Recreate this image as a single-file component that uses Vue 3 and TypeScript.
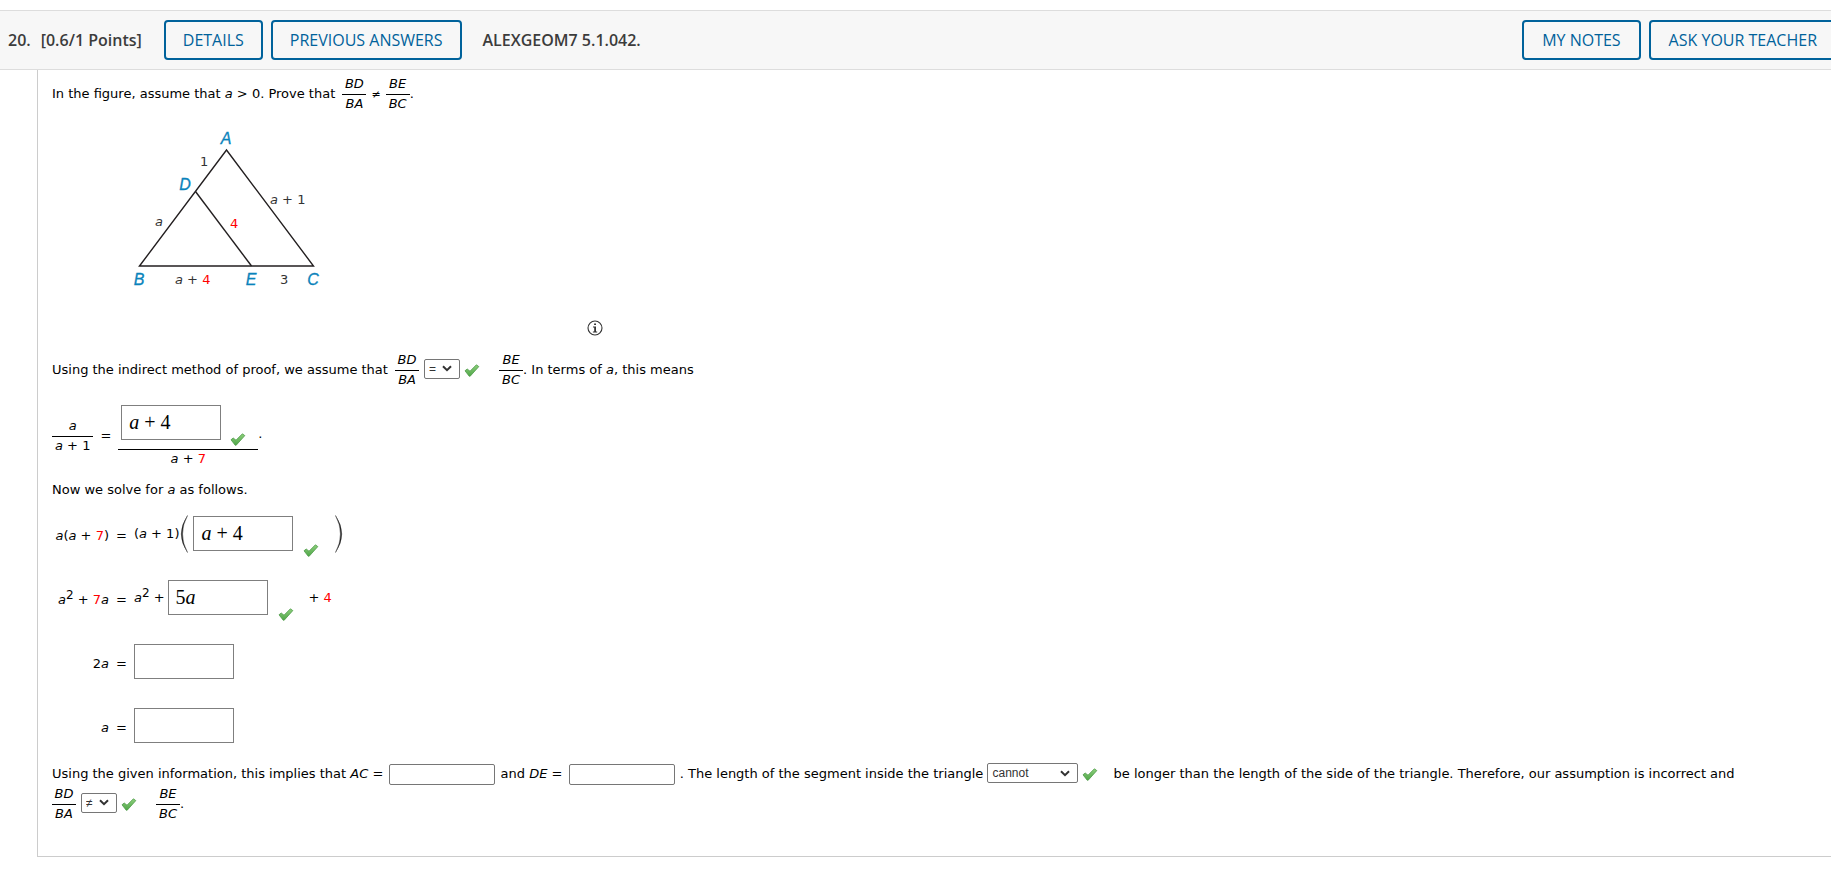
<script setup lang="ts">
import { reactive, ref } from 'vue'

type Part = { text: string; italic?: boolean }

const answers = reactive<Record<string, string>>({
  numerator: 'a + 4',
  factor: 'a + 4',
  middle: '5a',
  twoA: '',
  oneA: '',
})
const focused = ref('')
const relation = ref('=')
const conclusion = ref('≠')
const ability = ref('cannot')
const lengthAC = ref('')
const lengthDE = ref('')

// Variables are set in italics, digits and operators upright.
function parts(value: string): Part[] {
  return (value.match(/[a-z]+|[^a-z]+/gi) ?? []).map((text) => ({
    text,
    italic: /[a-z]/i.test(text),
  }))
}

function shown(key: string): string {
  return focused.value === key ? answers[key] : ''
}

function update(key: string, event: Event) {
  answers[key] = (event.target as HTMLInputElement).value
}
</script>

<template>
  <svg class="defs" aria-hidden="true">
    <defs>
      <linearGradient id="leaf" x1="0" y1="0" x2="0" y2="1">
        <stop offset="0" stop-color="#8ed07c" />
        <stop offset="1" stop-color="#4fa648" />
      </linearGradient>
      <symbol id="tick" viewBox="0 0 16 13">
        <path d="M1 6.8 L3.2 5 L6 7.2 L12.4 0.8 L14.8 2.6 L6.2 12.2 L5.2 12.2 Z" fill="url(#leaf)" stroke="#4c9a48" stroke-width="0.8" stroke-linejoin="round" />
      </symbol>
    </defs>
  </svg>

  <header class="bar">
    <strong class="number">20.</strong>
    <strong class="points">[0.6/1 Points]</strong>
    <button type="button" class="btn">DETAILS</button>
    <button type="button" class="btn">PREVIOUS ANSWERS</button>
    <strong class="code">ALEXGEOM7 5.1.042.</strong>
    <div class="actions">
      <button type="button" class="btn">MY NOTES</button>
      <button type="button" class="btn">ASK YOUR TEACHER</button>
    </div>
  </header>

  <main class="question">
    <p class="line">
      In the figure, assume that <i>a</i> &gt; 0. Prove that
      <span class="frac"><i>BD</i><i>BA</i></span>
      <span class="neq">≠</span>
      <span class="frac"><i>BE</i><i>BC</i></span>.
    </p>

    <div class="figure">
      <svg class="triangle" width="300" height="180" viewBox="0 0 300 180" role="img" aria-label="Triangle ABC with segment DE">
        <g fill="none" stroke="#231f20" stroke-width="1.4">
          <path d="M87.5 146 L174.5 30 L261.5 146 Z" />
          <path d="M143.5 71.5 L199.5 146" />
        </g>
        <g class="vertex">
          <text x="174" y="24">A</text>
          <text x="133" y="70">D</text>
          <text x="87" y="165">B</text>
          <text x="199" y="165">E</text>
          <text x="261" y="165">C</text>
        </g>
        <g class="measure">
          <text x="148" y="46">1</text>
          <text x="103" y="106" font-style="italic">a</text>
          <text x="218" y="84"><tspan font-style="italic">a</tspan> + 1</text>
          <text x="178" y="108" class="red">4</text>
          <text x="123" y="164"><tspan font-style="italic">a</tspan> + <tspan class="red">4</tspan></text>
          <text x="228" y="164">3</text>
        </g>
      </svg>
      <button type="button" class="info" aria-label="Image description">
        <svg width="16" height="16" viewBox="0 0 16 16">
          <circle cx="8" cy="8" r="7" fill="none" stroke="#333" stroke-width="1.1" />
          <path d="M7.1 3.4h1.9v1.7H7.1z M6 6.4h3v5h1.2v1.1H5.9v-1.1h1.3v-3.9H6z" fill="#333" />
        </svg>
      </button>
    </div>

    <p class="line">
      Using the indirect method of proof, we assume that
      <span class="frac"><i>BD</i><i>BA</i></span>
      <select v-model="relation" class="pick" aria-label="Assumed relation">
        <option>=</option>
        <option>≠</option>
      </select>
      <svg class="tick wide"><use href="#tick" /></svg>
      <span class="frac"><i>BE</i><i>BC</i></span>. In terms of <i>a</i>, this means
    </p>

    <div class="ratio">
      <span class="frac loose"><i>a</i><span><i>a</i> + 1</span></span>
      <span>=</span>
      <span class="stack">
        <span class="top">
          <span class="math">
            <input :value="shown('numerator')" aria-label="Numerator" @focus="focused = 'numerator'" @blur="focused = ''" @input="update('numerator', $event)" />
            <span v-if="focused !== 'numerator'" class="typeset"><component :is="p.italic ? 'i' : 'span'" v-for="(p, n) in parts(answers.numerator)" :key="n">{{ p.text }}</component></span>
          </span>
          <svg class="tick"><use href="#tick" /></svg>
        </span>
        <span class="bottom"><i>a</i> + <span class="red">7</span></span>
      </span>
      <span class="stop">.</span>
    </div>

    <p class="text">Now we solve for <i>a</i> as follows.</p>

    <div class="equations">
      <span class="lhs"><i>a</i>(<i>a</i> + <span class="red">7</span>)</span>
      <span class="eq">=</span>
      <div class="rhs">
        <span>(<i>a</i> + 1)</span>
        <svg class="paren" width="10" height="38" viewBox="0 0 10 38"><path d="M8.5 0.5 Q-4 19 8.5 37.5 Q-1.4 19 8.5 0.5Z" /></svg>
        <span class="math">
          <input :value="shown('factor')" aria-label="Factor" @focus="focused = 'factor'" @blur="focused = ''" @input="update('factor', $event)" />
          <span v-if="focused !== 'factor'" class="typeset"><component :is="p.italic ? 'i' : 'span'" v-for="(p, n) in parts(answers.factor)" :key="n">{{ p.text }}</component></span>
        </span>
        <svg class="tick low"><use href="#tick" /></svg>
        <svg class="paren" width="10" height="38" viewBox="0 0 10 38"><path d="M1.5 0.5 Q14 19 1.5 37.5 Q11.4 19 1.5 0.5Z" /></svg>
      </div>

      <span class="lhs"><i>a</i><sup>2</sup> + <span class="red">7</span><i>a</i></span>
      <span class="eq">=</span>
      <div class="rhs">
        <span><i>a</i><sup>2</sup> +</span>
        <span class="math after">
          <input :value="shown('middle')" aria-label="Middle term" @focus="focused = 'middle'" @blur="focused = ''" @input="update('middle', $event)" />
          <span v-if="focused !== 'middle'" class="typeset"><component :is="p.italic ? 'i' : 'span'" v-for="(p, n) in parts(answers.middle)" :key="n">{{ p.text }}</component></span>
        </span>
        <svg class="tick low"><use href="#tick" /></svg>
        <span>+ <span class="red">4</span></span>
      </div>

      <span class="lhs">2<i>a</i></span>
      <span class="eq">=</span>
      <div class="rhs"><span class="math"><input v-model="answers.twoA" aria-label="Value of 2a" /></span></div>

      <span class="lhs"><i>a</i></span>
      <span class="eq">=</span>
      <div class="rhs"><span class="math"><input v-model="answers.oneA" aria-label="Value of a" /></span></div>
    </div>

    <p class="line">
      <label for="ac">Using the given information, this implies that <i>AC</i> = </label>
      <input id="ac" v-model="lengthAC" class="blank" type="text" />
      <label for="de"> and <i>DE</i> = </label>
      <input id="de" v-model="lengthDE" class="blank" type="text" />
      . The length of the segment inside the triangle
      <select v-model="ability" class="pick long" aria-label="Can or cannot">
        <option>can</option>
        <option>cannot</option>
      </select>
      <svg class="tick wide"><use href="#tick" /></svg>
      be longer than the length of the side of the triangle. Therefore, our assumption is incorrect and
      <span class="group">
        <span class="frac first"><i>BD</i><i>BA</i></span>
        <select v-model="conclusion" class="pick" aria-label="Concluded relation">
          <option>=</option>
          <option>≠</option>
        </select>
        <svg class="tick wide"><use href="#tick" /></svg>
        <span class="frac"><i>BE</i><i>BC</i></span>.
      </span>
    </p>
  </main>
</template>

<style>
body {
  background: #fff;
  overflow-x: hidden;
}
</style>

<style scoped>
* {
  box-sizing: border-box;
}
.defs {
  position: absolute;
  width: 0;
  height: 0;
}
.bar {
  display: flex;
  align-items: center;
  gap: 8px;
  height: 60px;
  margin-top: 10px;
  padding-left: 8px;
  background: #f7f7f7;
  border-top: 1px solid #ddd;
  border-bottom: 1px solid #ddd;
  font: 16px "Open Sans", sans-serif;
  color: #3c3c3c;
  white-space: nowrap;
}
.bar strong {
  font-weight: 600;
}
.points {
  margin-left: 2px;
  margin-right: 14px;
}
.code {
  margin-left: 13px;
}
.btn {
  height: 40px;
  padding: 0 17px;
  border: 2px solid #00629b;
  border-radius: 4px;
  background: #fff0;
  color: #00629b;
  font: 500 16px "Open Sans", sans-serif;
}
.actions {
  display: flex;
  gap: 8px;
  margin-left: auto;
  margin-right: -6px;
}
.actions .btn {
  padding: 0 18px;
}
.question {
  margin-left: 37px;
  padding: 6px 0 34px 14px;
  border-left: 1px solid #ccc;
  border-bottom: 1px solid #ccc;
  font: 13px/16px "DejaVu Sans", Verdana, sans-serif;
  color: #000;
}
p {
  margin: 0;
}
.frac {
  display: inline-flex;
  flex-direction: column;
  align-items: center;
  vertical-align: middle;
  min-width: 24px;
  margin-left: 3px;
  padding: 0 2px;
}
.frac > :first-child {
  align-self: stretch;
  margin: 0 -2px;
  padding-bottom: 2px;
  border-bottom: 1px solid #000;
  text-align: center;
}
.frac > :last-child {
  padding-top: 1px;
}
.first {
  margin-left: 0;
}
.loose {
  margin-left: 0;
  padding: 0 3px;
}
.loose > :first-child {
  margin: 0 -3px;
}
.neq {
  margin: 0 2px 0 5px;
  font-size: 11px;
}
.red {
  color: #f00;
}
.figure {
  display: flex;
  align-items: flex-end;
  margin: 8px 0 16px;
}
.triangle {
  display: block;
  margin-bottom: 36px;
}
.vertex {
  fill: #0a83bb;
  stroke: #0a83bb;
  stroke-width: 0.3;
  font: italic 16px "Liberation Sans", Arial, sans-serif;
  text-anchor: middle;
}
.measure {
  fill: #333;
  font: 13px "DejaVu Sans", Verdana, sans-serif;
}
.measure .red {
  fill: #f00;
}
.info {
  margin-left: 235px;
  padding: 0;
  border: 0;
  background: none;
  line-height: 0;
}
.pick {
  appearance: none;
  width: 36px;
  height: 20px;
  margin: 0 4px 3px 0;
  padding: 0 4px;
  font: 12px "Liberation Sans", Arial, sans-serif;
  color: #333;
  background: #fff url("data:image/svg+xml,%3Csvg xmlns='http://www.w3.org/2000/svg' width='10' height='7'%3E%3Cpath d='M1 1.2L5 5.2L9 1.2' fill='none' stroke='%23333' stroke-width='2'/%3E%3C/svg%3E") no-repeat right 7px center;
  border: 1px solid #767676;
  border-radius: 2px;
  vertical-align: middle;
}
.frac + .pick {
  margin-left: 5px;
}
.long {
  width: 91px;
}
.tick {
  width: 16px;
  height: 13px;
  vertical-align: -3px;
}
.wide {
  margin-right: 11px;
}
.wide + .frac {
  margin-left: 8px;
}
.ratio {
  display: flex;
  align-items: center;
  gap: 7px;
  margin-top: 17px;
}
.stack {
  display: flex;
  flex-direction: column;
  width: 140px;
}
.top {
  display: flex;
  gap: 9px;
  height: 45px;
  padding-left: 3px;
  border-bottom: 1px solid #000;
}
.top .tick {
  align-self: flex-end;
  margin-bottom: 3px;
}
.bottom {
  padding-top: 1px;
  text-align: center;
}
.stop {
  margin-left: -7px;
  padding-bottom: 4px;
}
.math {
  position: relative;
  display: block;
  width: 100px;
  height: 35px;
}
.math input {
  display: block;
  width: 100%;
  height: 100%;
  padding: 0 7px;
  border: 1px solid #7f7f7f;
  background: #fff;
  font: 20px "Liberation Serif", "Times New Roman", serif;
}
.typeset {
  position: absolute;
  left: 8px;
  top: 5px;
  font: 20px/24px "Liberation Serif", "Times New Roman", serif;
  white-space: pre;
  pointer-events: none;
}
.text {
  margin: 15px 0 18px;
}
.equations {
  display: grid;
  grid-template-columns: minmax(57px, max-content) auto 1fr;
  column-gap: 7px;
  row-gap: 29px;
  align-items: center;
  margin-bottom: 20px;
}
.lhs {
  padding-top: 4px;
  text-align: right;
}
.eq {
  padding-top: 4px;
}
.rhs {
  display: flex;
  align-items: center;
  height: 35px;
}
.paren {
  flex: none;
  fill: #222;
  stroke: #222;
  stroke-width: 0.4;
  margin-right: 4px;
}
.low {
  align-self: flex-end;
  margin: 0 15px -6px 10px;
}
.after {
  margin-left: 3px;
}
sup {
  font-size: 12px;
  line-height: 0;
}
.blank {
  width: 106px;
  height: 21px;
  border: 1px solid #767676;
  border-radius: 2px;
  vertical-align: middle;
}
label + .blank {
  margin: 0 1px 0 2px;
}
.group {
  display: inline-block;
  white-space: nowrap;
}
</style>
